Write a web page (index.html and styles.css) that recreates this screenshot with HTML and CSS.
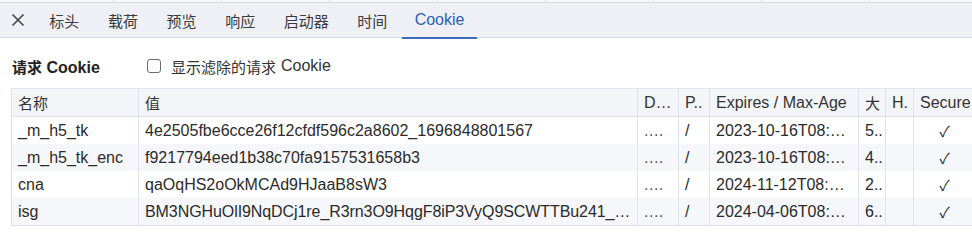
FILE: index.html
```html
<!DOCTYPE html>
<html lang="zh">
<head>
<meta charset="utf-8">
<link rel="stylesheet" href="styles.css">
</head>
<body>
<div class="topstrip">
  <span></span><span></span><span></span><span></span><span></span><span></span><span></span><span></span><span></span>
</div>
<div class="tabbar">
  <span class="close">
    <svg width="14" height="14" viewBox="0 0 14 14"><path d="M1.5 1.5 L12.5 12.5 M12.5 1.5 L1.5 12.5" stroke="#444" stroke-width="1.6" fill="none"/></svg>
  </span>
  <span class="tab">标头</span>
  <span class="tab">载荷</span>
  <span class="tab">预览</span>
  <span class="tab">响应</span>
  <span class="tab">启动器</span>
  <span class="tab">时间</span>
  <span class="tab active">Cookie</span>
</div>
<div class="content">
  <div class="section-head">
    <span class="section-title"><span class="cjk">请求</span> Cookie</span>
    <label class="filter"><span class="checkbox"></span><span class="cjk">显示滤除的请求</span><span class="gap"></span>Cookie</label>
  </div>
  <table class="cookies">
    <colgroup>
      <col class="c-name"><col class="c-value"><col class="c-domain"><col class="c-path"><col class="c-expires"><col class="c-size"><col class="c-http"><col class="c-secure">
    </colgroup>
    <thead>
      <tr><th><span class="cjk">名称</span></th><th><span class="cjk">值</span></th><th>D…</th><th>P..</th><th>Expires / Max-Age</th><th class="tight"><span class="cjk">大</span></th><th class="tight">H.</th><th>Secure</th></tr>
    </thead>
    <tbody>
      <tr><td>_m_h5_tk</td><td>4e2505fbe6cce26f12cfdf596c2a8602_1696848801567</td><td class="dots">....</td><td>/</td><td>2023-10-16T08:…</td><td class="tight">5..</td><td></td><td class="chk">✓</td></tr>
      <tr><td>_m_h5_tk_enc</td><td>f9217794eed1b38c70fa9157531658b3</td><td class="dots">....</td><td>/</td><td>2023-10-16T08:…</td><td class="tight">4..</td><td></td><td class="chk">✓</td></tr>
      <tr><td>cna</td><td>qaOqHS2oOkMCAd9HJaaB8sW3</td><td class="dots">....</td><td>/</td><td>2024-11-12T08:…</td><td class="tight">2..</td><td></td><td class="chk">✓</td></tr>
      <tr><td>isg</td><td class="clip">BM3NGHuOlI9NqDCj1re_R3rn3O9HqgF8iP3VyQ9SCWTTBu241_…</td><td class="dots">....</td><td>/</td><td>2024-04-06T08:…</td><td class="tight">6..</td><td></td><td class="chk">✓</td></tr>
    </tbody>
  </table>
</div>
</body>
</html>
```
FILE: styles.css
```css
html, body {
  margin: 0;
  padding: 0;
  background: #ffffff;
  overflow: hidden;
  font-family: "Liberation Sans", "Noto Sans CJK SC", sans-serif;
  color: #2b2b2b;
}

.cjk {
  font-size: 15px;
}

.topstrip {
  display: flex;
  height: 2px;
  background: #f7f8fb;
  border-bottom: 1px solid #d6dae6;
  overflow: hidden;
}
.topstrip span {
  flex: 0 0 108px;
  border-right: 1px solid #dde1ea;
  box-sizing: border-box;
}
.topstrip span:first-child {
  flex-basis: 114px;
}

.tabbar {
  display: flex;
  align-items: stretch;
  height: 34px;
  background: #eef0f6;
  border-bottom: 1px solid #d6dae7;
  font-size: 15px;
  color: #3a3a3a;
}
.close {
  display: flex;
  align-items: center;
  justify-content: center;
  width: 36px;
}
.tab {
  display: flex;
  align-items: center;
  padding: 0 14.3px;
  position: relative;
}
.close + .tab { margin-left: -1px; }
.tab.active {
  color: #2d5fb5;
  font-size: 16px;
  padding: 0 13px;
}
.tab.active::after {
  content: "";
  position: absolute;
  left: 0;
  right: 0;
  bottom: -2px;
  height: 2px;
  background: #3d6cc0;
}

.content {
  padding: 0 0 0 11px;
}
.section-head {
  display: flex;
  align-items: center;
  height: 44px;
  padding-top: 6px;
  font-size: 16px;
}
.section-title {
  font-weight: bold;
  color: #222;
  width: 135px;
  padding-left: 1px;
}
.filter {
  display: flex;
  align-items: center;
  color: #333;
}
.gap {
  display: inline-block;
  width: 5px;
}
.checkbox {
  width: 12px;
  height: 12px;
  border: 1.3px solid #6b6b6b;
  border-radius: 3px;
  margin-right: 10px;
  background: #fff;
}

.cookies {
  border-collapse: collapse;
  table-layout: fixed;
  width: 966px;
  font-size: 16px;
  color: #2b2b2b;
}
.c-name { width: 127px; }
.c-value { width: 499px; }
.c-domain { width: 41px; }
.c-path { width: 31px; }
.c-expires { width: 149px; }
.c-size { width: 27px; }
.c-http { width: 28px; }
.c-secure { width: 64px; }

.cookies th, .cookies td {
  border: 1px solid #dde2ee;
  padding: 0 6px;
  white-space: nowrap;
  overflow: hidden;
  text-overflow: ellipsis;
  text-align: left;
  font-weight: normal;
}
.cookies td {
  border-top: none;
  border-bottom: none;
}
.cookies tbody tr:last-child td {
  border-bottom: 1px solid #dde2ee;
}
.cookies th {
  height: 27px;
  background: #f3f5f9;
  color: #333;
}
.cookies td {
  height: 27px;
}
.cookies tbody tr:nth-child(even) td {
  background: #f6f7fa;
}
.cookies .tight {
  padding: 0 0 0 6px;
  text-overflow: clip;
}
.cookies td.clip {
  text-overflow: clip;
  padding-right: 0;
  letter-spacing: -0.08px;
}
.cookies td.dots {
  color: #555;
  letter-spacing: 0.5px;
}
.cookies td.chk {
  text-align: center;
  padding-right: 8px;
  font-size: 15px;
}
```
